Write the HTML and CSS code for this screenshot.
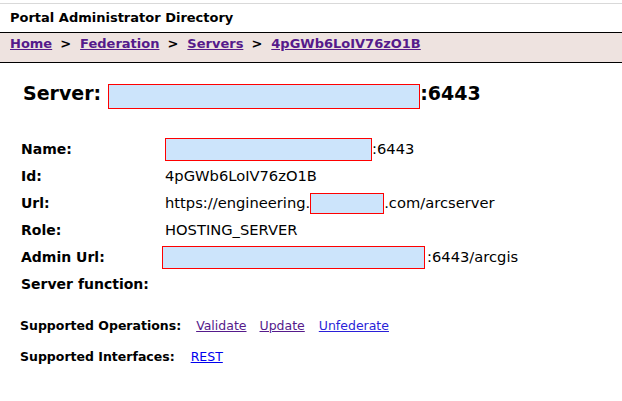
FILE: index.html
```html
<!DOCTYPE html>
<html>
<head>
<meta charset="utf-8">
<link rel="stylesheet" href="styles.css">
</head>
<body>
<div class="topline"></div>
<div class="title">Portal Administrator Directory</div>
<div class="crumbs">
  <a class="v" href="#">Home</a><span class="sep">&gt;</span><a class="v" href="#">Federation</a><span class="sep">&gt;</span><a class="v" href="#">Servers</a><span class="sep">&gt;</span><a class="v" href="#">4pGWb6LoIV76zO1B</a>
</div>
<div class="main">
  <h1 class="heading">Server: <span class="redact r-head"></span>:6443</h1>
  <div class="props">
    <div class="lbl">Name:</div><div class="val"><span class="redact r-name"></span>:6443</div>
    <div class="lbl">Id:</div><div class="val">4pGWb6LoIV76zO1B</div>
    <div class="lbl">Url:</div><div class="val">https://engineering.<span class="redact r-url"></span>.com/arcserver</div>
    <div class="lbl">Role:</div><div class="val">HOSTING_SERVER</div>
    <div class="lbl">Admin Url:</div><div class="val admin"><span class="redact r-admin"></span>:6443/arcgis</div>
    <div class="lbl">Server function:</div><div class="val"></div>
  </div>
  <div class="ops">
    <b>Supported Operations:</b>
    <a class="v op1" href="#">Validate</a><a class="v op2" href="#">Update</a><a class="b2 op3" href="#">Unfederate</a>
  </div>
  <div class="ifaces">
    <b>Supported Interfaces:</b>
    <a class="b1 rest" href="#">REST</a>
  </div>
</div>
</body>
</html>
```
FILE: styles.css
```css
html, body { margin: 0; padding: 0; background: #fff; }
body { font-family: "DejaVu Sans", Verdana, sans-serif; color: #000; width: 622px; height: 401px; overflow: hidden; }
.topline { height: 1px; background: #d9d9d9; margin-top: 3px; }
.title { font-weight: bold; font-size: 13px; height: 28px; line-height: 28px; padding-left: 10px; }
.crumbs { background: #eee3e0; border-top: 1px solid #000; border-bottom: 1px solid #000; height: 29px; padding-left: 10px; font-size: 13px; font-weight: bold; line-height: 22px; }
.crumbs .sep { margin: 0 9px 0 8px; }
a.v { color: #551a8b; }
a.b2 { color: #2a1fd8; }
a.b1 { color: #0000ee; }
.main { padding-left: 21px; }
.heading { font-size: 19px; font-weight: bold; margin: 0; padding-top: 18px; height: 46px; padding-left: 2px; display: flex; align-items: flex-start; line-height: 24px; }
.redact { display: inline-block; background: #cce4fb; border: 1px solid #f00; box-sizing: border-box; }
.r-head { width: 312px; height: 25px; margin: 3px 0 0 7px; }
.props { display: grid; grid-template-columns: 144px auto; grid-auto-rows: 27px; font-size: 14px; margin-top: 12px; }
.lbl { font-weight: bold; line-height: 20px; }
.val { line-height: 20px; display: flex; align-items: center; height: 20px; font-size: 14.7px; }
.r-name { width: 207px; height: 23px; }
.r-url { width: 74px; height: 21px; }
.r-admin { width: 263px; height: 23px; margin-left: -3px; margin-right: 2px; }
.ops, .ifaces { font-size: 12.5px; margin-left: -1px; }
.ops { margin-top: 17px; }
.ifaces { margin-top: 16px; }
.op1 { margin-left: 11px; }
.op2 { margin-left: 13px; }
.op3 { margin-left: 14px; }
.rest { margin-left: 12px; }
```
